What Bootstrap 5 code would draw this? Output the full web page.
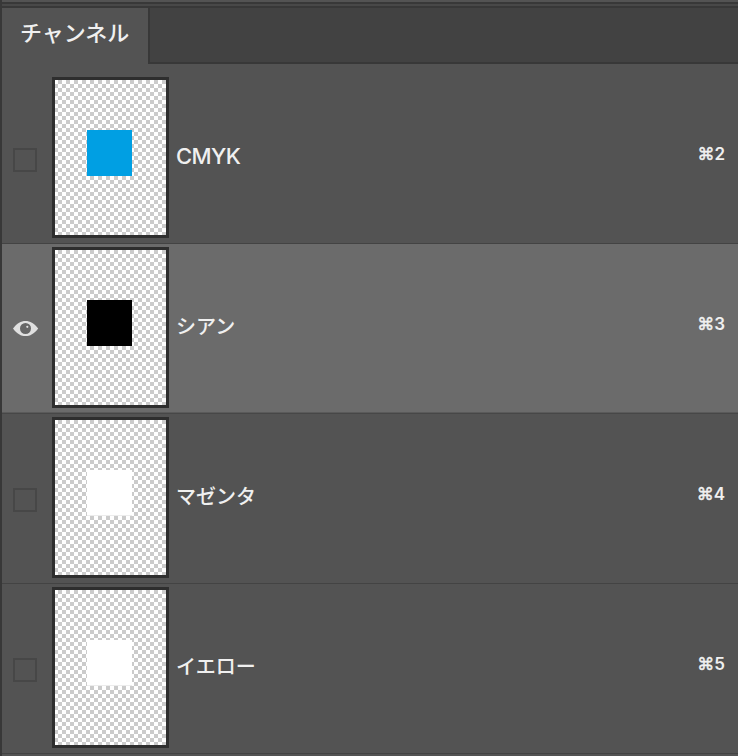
<!DOCTYPE html>
<html lang="ja">
<head>
<meta charset="utf-8">
<meta name="viewport" content="width=device-width, initial-scale=1">
<title>チャンネル</title>
<link href="https://cdn.jsdelivr.net/npm/bootstrap@5.3.0/dist/css/bootstrap.min.css" rel="stylesheet">
<style>
body{background:#535353;color:#f0f0f0;font-family:Inter,"Noto Sans CJK JP",sans-serif;height:756px;overflow:hidden}
.panel{height:756px;border-left:2px solid #383838}
.seam{height:8px;flex:none;background:linear-gradient(#535353 2px,#383838 2px 4px,#484848 4px 6px,#383838 6px)}
.tabs{height:56px;flex:none}
.tab-on{width:146px;padding:0 0 6px 18px;font-size:22px;line-height:1;font-weight:500;white-space:nowrap}
.tab-rest{background:#424242;border-left:2px solid #383838;border-bottom:2px solid #383838}
.channels{padding-top:10px}
.channel{height:170px;flex:none;border-bottom:1px solid #434343;padding:0 13px 0 0}
.channel.active{background:#6b6b6b;border-bottom-color:#474747;box-shadow:inset 0 -1px #5a5a5a}
.eye-col{width:50px;padding:74px 0 0 11px}
.off{width:24px;height:24px;border:2px solid #474747}
.eye-col svg{display:block;margin-top:1px}
.thumb{width:117px;height:161px;margin-top:3px;border:3px solid #2e2e2e;padding:50px 0 0 32px;background:repeating-conic-gradient(#cbcbcb 0 25%,#fff 0 50%) -1px 0/8px 8px padding-box}
.ink{width:45px;height:46px}
.cyan{background:#009fe3}.black{background:#000}.blank{background:#fff;border-bottom:1px solid #ececec}
.label{margin-left:7px;padding-top:71px;font-size:20px;line-height:24px;font-weight:500}
.latin{font-size:22px;padding-top:70px;letter-spacing:-.6px}
.key{padding-top:70px;font-size:17px;line-height:20px;font-weight:600}
.cmd{font-family:"DejaVu Sans",sans-serif;font-weight:400;font-size:17px;-webkit-text-stroke:.5px #f0f0f0}
</style>
</head>
<body>
<main class="panel d-flex flex-column">
<div class="seam"></div>
<header class="tabs d-flex"><div class="tab-on d-flex align-items-center">チャンネル</div><div class="tab-rest flex-grow-1"></div></header>
<section class="channels d-flex flex-column">
<div class="channel d-flex align-items-start"><div class="eye-col"><div class="off"></div></div><div class="thumb"><div class="ink cyan"></div></div><div class="label latin">CMYK</div><div class="key ms-auto"><span class="cmd">⌘</span>2</div></div>
<div class="channel active d-flex align-items-start"><div class="eye-col"><svg width="26" height="18" viewBox="0 0 26 18"><path fill="#e0e0e0" d="M0 9.500C4 4 8 1.900 12.500 1.900S21 4 25.200 9.500C21 15 17 17.100 12.500 17.100S4 15 0 9.500Z"/><circle cx="12.500" cy="9.500" r="5.500" fill="#666"/><circle cx="14.300" cy="7.800" r="1.100" fill="#e0e0e0"/></svg></div><div class="thumb"><div class="ink black"></div></div><div class="label">シアン</div><div class="key ms-auto"><span class="cmd">⌘</span>3</div></div>
<div class="channel d-flex align-items-start"><div class="eye-col"><div class="off"></div></div><div class="thumb"><div class="ink blank"></div></div><div class="label">マゼンタ</div><div class="key ms-auto"><span class="cmd">⌘</span>4</div></div>
<div class="channel d-flex align-items-start"><div class="eye-col"><div class="off"></div></div><div class="thumb"><div class="ink blank"></div></div><div class="label">イエロー</div><div class="key ms-auto"><span class="cmd">⌘</span>5</div></div>
</section>
</main>
<script src="https://cdn.jsdelivr.net/npm/bootstrap@5.3.0/dist/js/bootstrap.bundle.min.js"></script>
</body>
</html>
